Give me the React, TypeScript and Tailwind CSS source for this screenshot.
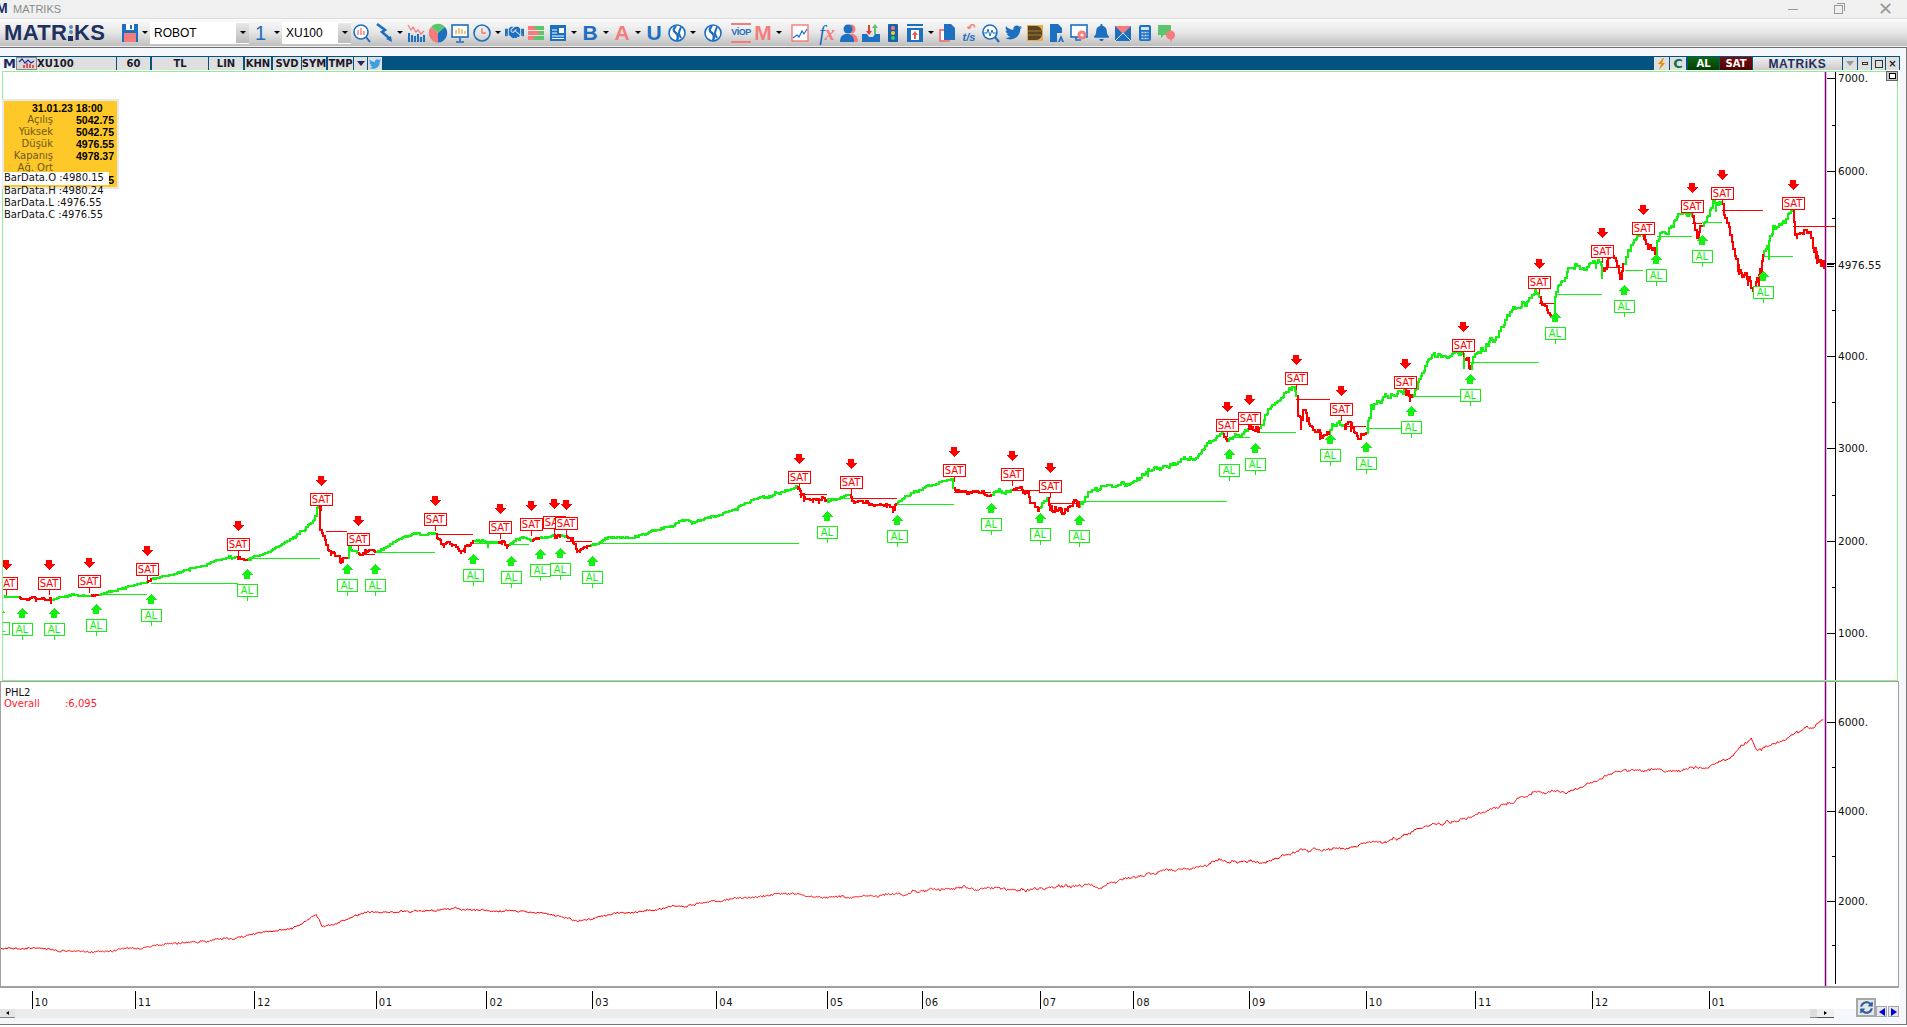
import { ReactNode } from "react";
import { FaBell, FaHandshake, FaSyncAlt, FaTwitter } from "react-icons/fa";

const K = 1907 / 1568;
const BLUE = "#1d6fc0";
const SALMON = "#f47c7c";
const GREEN = "#5cc46a";

// [x, y, 0 green | 1 red] in page pixels
const PRICE: [number, number, number][] = [
  [3, 597, 0], [18, 597, 0], [24, 598, 1], [41, 597, 1], [51, 599, 1], [69, 595, 0], [90, 596, 0], [98, 594, 1], [122, 588, 0], [147, 583, 0],
  [151, 581, 1], [190, 568, 0], [229, 557, 0], [237, 558, 0], [247, 559, 1], [269, 550, 0], [294, 538, 0], [314, 520, 0], [318, 503, 0],
  [320, 530, 1], [326, 547, 1], [335, 557, 1], [341, 560, 1], [347, 555, 1], [349, 547, 0], [357, 553, 0], [365, 550, 1], [375, 554, 1],
  [384, 547, 0], [400, 538, 0], [429, 532, 0], [435, 533, 0], [441, 542, 1], [449, 540, 1], [459, 548, 1], [473, 543, 1], [498, 540, 0],
  [508, 547, 1], [522, 537, 0], [531, 540, 0], [539, 540, 1], [553, 536, 0], [555, 538, 1], [560, 537, 1], [565, 537, 0], [571, 538, 1],
  [577, 555, 1], [590, 545, 1], [594, 543, 0], [608, 540, 0], [640, 534, 0], [654, 532, 0], [676, 525, 0], [701, 522, 0], [726, 512, 0],
  [751, 500, 0], [776, 493, 0], [797, 489, 0], [801, 497, 1], [811, 502, 1], [826, 499, 1], [849, 496, 0], [852, 503, 1], [869, 505, 1],
  [890, 508, 1], [896, 505, 1], [911, 495, 0], [926, 488, 0], [951, 480, 0], [953, 488, 0], [961, 490, 1], [985, 495, 1], [991, 492, 1],
  [1011, 487, 0], [1026, 492, 1], [1036, 505, 1], [1039, 506, 1], [1047, 498, 0], [1050, 502, 1], [1056, 506, 1], [1065, 502, 1], [1079, 505, 1],
  [1092, 493, 0], [1122, 489, 0], [1140, 480, 0], [1161, 468, 0], [1182, 460, 0], [1193, 462, 0], [1207, 445, 0], [1223, 436, 0], [1227, 440, 1],
  [1233, 435, 0], [1248, 430, 0], [1252, 433, 1], [1259, 427, 1], [1268, 410, 0], [1293, 387, 0], [1296, 398, 0], [1298, 417, 1], [1304, 407, 1],
  [1318, 425, 1], [1329, 423, 1], [1336, 420, 0], [1343, 425, 0], [1348, 422, 1], [1361, 435, 1], [1366, 432, 1], [1371, 407, 0], [1386, 396, 0],
  [1404, 393, 0], [1407, 398, 1], [1412, 397, 1], [1425, 363, 0], [1453, 356, 0], [1464, 360, 0], [1470, 365, 1], [1475, 348, 0], [1493, 340, 0],
  [1507, 320, 0], [1528, 305, 0], [1535, 290, 0], [1539, 300, 0], [1553, 310, 1], [1555, 293, 0], [1568, 272, 0], [1593, 263, 0], [1598, 257, 0],
  [1602, 267, 0], [1616, 265, 1], [1620, 283, 1], [1623, 273, 1], [1628, 253, 0], [1640, 237, 0], [1643, 243, 0], [1655, 245, 1], [1657, 233, 0],
  [1675, 218, 0], [1692, 213, 0], [1697, 232, 1], [1702, 223, 1], [1713, 200, 0], [1722, 205, 0], [1727, 227, 1], [1733, 250, 1], [1745, 267, 1],
  [1753, 287, 1], [1763, 257, 1], [1773, 227, 0], [1792, 213, 0], [1795, 230, 1], [1810, 240, 1], [1817, 253, 1], [1824, 263, 1],
];

const SAT: [number, number][] = [
  [6, 583], [49, 583], [89, 581], [147, 569], [238, 544], [321, 499], [358, 539], [435, 519], [500, 527], [531, 524], [554, 522], [566, 523],
  [799, 477], [851, 482], [954, 470], [1012, 474], [1050, 486], [1227, 425], [1249, 418], [1296, 378], [1341, 409], [1405, 382], [1463, 345],
  [1539, 282], [1602, 251], [1643, 228], [1692, 206], [1722, 193], [1793, 203],
];

const AL: [number, number][] = [
  [-1, 628], [22, 629], [54, 629], [96, 625], [151, 615], [247, 590], [347, 585], [375, 585], [473, 575], [511, 577], [540, 570], [560, 569], [592, 577],
  [827, 532], [897, 536], [991, 524], [1040, 534], [1079, 536], [1229, 470], [1255, 464], [1330, 455], [1366, 463], [1411, 427], [1470, 395],
  [1555, 333], [1624, 306], [1656, 275], [1702, 256], [1763, 292],
];

const GREEN_LEVELS = [
  [98, 147, 594], [151, 238, 583], [247, 320, 558], [375, 435, 552], [473, 500, 543], [510, 529, 544], [592, 799, 543], [827, 851, 498], [897, 954, 504],
  [992, 1012, 492], [1079, 1227, 501], [1229, 1250, 437], [1259, 1296, 432], [1366, 1404, 428], [1412, 1461, 396], [1470, 1539, 362], [1555, 1602, 294],
  [1625, 1643, 270], [1657, 1692, 236], [1702, 1722, 222], [1763, 1793, 256],
];

const RED_LEVELS = [
  [326, 347, 531], [359, 375, 554], [435, 473, 534], [566, 592, 541], [799, 827, 494], [851, 897, 498], [954, 991, 492], [1012, 1039, 490], [1050, 1079, 503],
  [1296, 1330, 399], [1343, 1366, 426], [1539, 1555, 303], [1602, 1624, 267], [1692, 1702, 223], [1722, 1763, 210], [1793, 1835, 226],
];

// the lower pane line, taken from the picture at 1568 wide
const OVERALL = [
  [0, 780], [50, 781], [90, 782], [150, 776], [200, 770], [240, 763], [260, 752], [265, 763], [300, 750], [380, 747], [440, 750], [475, 757], [500, 752],
  [600, 740], [640, 735], [700, 738], [780, 730], [850, 731], [900, 727], [960, 717], [1000, 707], [1040, 710], [1070, 697], [1100, 697], [1130, 693],
  [1170, 680], [1210, 672], [1260, 652], [1290, 650], [1340, 633], [1400, 632], [1425, 625], [1440, 605], [1445, 615], [1480, 603], [1500, 593],
];

const MONTHS: [string, number][] = [
  ["10", 26], ["11", 111], ["12", 209], ["01", 309], ["02", 400], ["03", 487], ["04", 589], ["05", 680],
  ["06", 758], ["07", 855], ["08", 932], ["09", 1027], ["10", 1123], ["11", 1213], ["12", 1309], ["01", 1405],
];

const seeded = (seed: number) => () => {
  seed = (seed + 0x6d2b79f5) | 0;
  let t = Math.imul(seed ^ (seed >>> 15), 1 | seed);
  t = (t + Math.imul(t ^ (t >>> 7), 61 | t)) ^ t;
  return ((t ^ (t >>> 14)) >>> 0) / 4294967296;
};

const buildBars = () => {
  const rnd = seeded(7);
  const paths = ["", ""];
  let py = PRICE[0][1];
  let walk = 0;
  for (let i = 1; i < PRICE.length; i++) {
    const [x0, y0] = PRICE[i - 1];
    const [x1, y1, c] = PRICE[i];
    const steps = Math.max(1, Math.round((x1 - x0) / 1.5));
    for (let s = 1; s <= steps; s++) {
      const x = x0 + ((x1 - x0) * s) / steps;
      const base = y0 + ((y1 - y0) * s) / steps;
      const amp = (x < 300 ? 0.8 : x < 1000 ? 1.3 : x < 1300 ? 2.4 : 3.4) * (c ? 1.6 : 1);
      walk = walk * 0.86 + (rnd() - 0.5) * amp * 1.6;
      const y = base + walk + (rnd() - 0.5) * amp;
      let bot = Math.max(y, py) + 1;
      if (rnd() < (c ? 0.14 : 0.03)) bot += rnd() * (x > 1200 ? 13 : 4);
      paths[c] += `M${x.toFixed(1)} ${(Math.min(y, py) - 1).toFixed(1)}V${bot.toFixed(1)}`;
      py = y;
    }
  }
  return paths;
};

const buildOverall = () => {
  const rnd = seeded(21);
  let d = "";
  let walk = 0;
  for (let i = 1; i < OVERALL.length; i++) {
    const [x0, y0] = OVERALL[i - 1];
    const [x1, y1] = OVERALL[i];
    const steps = Math.round((x1 - x0) * K);
    for (let s = 0; s < steps; s++) {
      const x = (x0 + ((x1 - x0) * s) / steps) * K;
      walk = walk * 0.93 + (rnd() - 0.5) * (x < 900 ? 1.2 : 2.2);
      const y = (y0 + ((y1 - y0) * s) / steps) * K + walk + (rnd() - 0.5) * 1.6;
      d += `${d ? "L" : "M"}${x.toFixed(1)} ${y.toFixed(1)}`;
    }
  }
  return d;
};

const bars = buildBars();
const overall = buildOverall();

const Caret = () => (
  <span className="flex w-[10px] justify-center">
    <span className="h-0 w-0 border-x-[3px] border-t-[3px] border-x-transparent border-t-black" />
  </span>
);

const Tool = ({ children, className = "" }: { children: ReactNode; className?: string }) => (
  <span className={`flex h-[22px] w-[22px] items-center justify-center ${className}`}>{children}</span>
);

const Ico = ({ children }: { children: ReactNode }) => (
  <svg width="20" height="20" viewBox="0 0 20 20">
    {children}
  </svg>
);

const Drop = () => (
  <span className="flex h-[20px] w-[13px] items-center justify-center bg-gradient-to-b from-[#e8e8e8] to-[#bbbbbb]">
    <span className="h-0 w-0 border-x-[3px] border-t-[3px] border-x-transparent border-t-black" />
  </span>
);

const Globe = () => (
  <Ico>
    <circle cx="10" cy="10" r="8" fill="#fff" stroke={BLUE} strokeWidth="1.6" />
    <path d="M9 3C6 6 6 8 9 10s2 5 1 8" stroke={BLUE} strokeWidth="2.4" fill="none" />
    <path d="M14 4c-1 3-2 4-2 6s1 3 2 5" stroke={BLUE} strokeWidth="2" fill="none" />
  </Ico>
);

const Toolbar = () => (
  <div className="flex h-[27px] items-center bg-gradient-to-b from-[#fbfbfb] via-[#e6e6e6] to-[#bfbfbf]">
    <span className="ml-[4px] flex w-[116px] items-center font-['Liberation_Sans',sans-serif] text-[22px] leading-none font-bold tracking-[0.3px] text-[#20305f]">
      MATR
      <span className="mx-[1px] flex h-[16px] w-[5px] flex-col items-center justify-between">
        <span className="h-[4px] w-[4px] rounded-full bg-[#5a86b8]" />
        <span className="h-[4px] w-[4px] rounded-full bg-[#5a86b8]" />
        <span className="h-[5px] w-[5px] bg-[#20305f]" />
      </span>
      KS
    </span>
    <span className="flex w-[20px] justify-center">
      <Ico>
        <rect x="2" y="1" width="16" height="18" fill={BLUE} />
        <rect x="6" y="1" width="8" height="6" fill="#fff" />
        <rect x="10" y="2" width="2" height="4" fill={BLUE} />
        <rect x="4" y="10" width="12" height="9" fill={SALMON} />
      </Ico>
    </span>
    <Caret />
    <div className="flex h-[22px] w-[99px] items-center justify-between bg-white pl-[4px] text-[12px] text-black">
      ROBOT
      <Drop />
    </div>
    <span className="flex w-[23px] justify-center text-[20px] leading-none text-[#1d6fc0]">1</span>
    <Caret />
    <div className="flex h-[22px] w-[69px] items-center justify-between bg-white pl-[4px] text-[12px] text-black">
      XU100
      <Drop />
    </div>
    <Tool>
      <Ico>
        <circle cx="9" cy="9" r="7" fill="#fff" stroke={BLUE} strokeWidth="1.6" />
        <path d="M6 12V7M9 12V5M12 12V8" stroke={SALMON} strokeWidth="1.4" />
        <path d="M14 14l4 5" stroke={BLUE} strokeWidth="2" />
      </Ico>
    </Tool>
    <Tool>
      <Ico>
        <path d="M3 1l8 6-3 2 7 6" stroke={BLUE} strokeWidth="2.6" fill="none" />
        <path d="M12 16l6 3-1-6z" fill={BLUE} />
      </Ico>
    </Tool>
    <Caret />
    <Tool>
      <Ico>
        <path d="M2 2l3 5 2-3 3 5 2-2 3 4 3-3" stroke={SALMON} strokeWidth="1.2" fill="none" />
        <path d="M3 19V10M6 19V12M9 19V13M12 19V11M15 19V14M18 19V12" stroke={BLUE} strokeWidth="2" />
      </Ico>
    </Tool>
    <Tool>
      <Ico>
        <path d="M10 10L3 4a9 9 0 0 1 14 0z" fill={GREEN} />
        <path d="M10 10V19.5A9.5 9.5 0 0 1 3 4z" fill={SALMON} />
        <path d="M10 10V19.5A9.5 9.5 0 0 0 17 4z" fill={BLUE} />
      </Ico>
    </Tool>
    <Tool>
      <Ico>
        <rect x="2" y="2" width="16" height="12" fill="#fff" stroke={BLUE} strokeWidth="1.6" />
        <path d="M6 11V7M9 11V5M12 11V6M15 11V8" stroke="#e8a030" strokeWidth="1.2" />
        <path d="M10 14v4M6 19h8" stroke={BLUE} strokeWidth="1.6" />
      </Ico>
    </Tool>
    <Tool>
      <Ico>
        <circle cx="10" cy="10" r="8" fill="none" stroke={BLUE} strokeWidth="1.6" />
        <path d="M10 5v5h4" stroke={SALMON} strokeWidth="1.4" fill="none" />
      </Ico>
    </Tool>
    <Caret />
    <Tool>
      <FaHandshake size={19} color={BLUE} />
    </Tool>
    <Tool>
      <Ico>
        <rect x="2" y="3" width="7" height="4" fill={SALMON} />
        <rect x="9" y="3" width="9" height="4" fill={GREEN} />
        <rect x="2" y="8" width="11" height="4" fill={SALMON} />
        <rect x="13" y="8" width="5" height="4" fill={GREEN} />
        <rect x="2" y="13" width="6" height="4" fill={SALMON} />
        <rect x="8" y="13" width="10" height="4" fill={GREEN} />
      </Ico>
    </Tool>
    <Tool>
      <Ico>
        <rect x="2" y="2" width="16" height="16" fill={BLUE} />
        <path d="M4 7h5M4 10h5M4 13h12M4 15.5h12" stroke="#fff" strokeWidth="1.2" />
        <rect x="11" y="5" width="5" height="5" fill="#fff" />
      </Ico>
    </Tool>
    <Caret />
    <Tool>
      <span className="text-[21px] leading-none font-bold text-[#1d6fc0]">B</span>
    </Tool>
    <Caret />
    <Tool>
      <span className="text-[21px] leading-none font-bold text-[#f47c7c]">A</span>
    </Tool>
    <Caret />
    <Tool>
      <span className="text-[21px] leading-none font-bold text-[#1d6fc0]">U</span>
    </Tool>
    <Tool className="ml-[1px]">
      <Globe />
    </Tool>
    <Caret />
    <Tool className="ml-[4px]">
      <Globe />
    </Tool>
    <Tool className="ml-[6px]">
      <span className="flex h-[20px] w-[20px] flex-col justify-between">
        <span className="h-[2px] bg-[#f47c7c]" />
        <span className="text-center text-[9px] leading-none font-bold tracking-[-0.5px] text-[#1d6fc0]">VİOP</span>
        <span className="h-[2px] bg-[#f47c7c]" />
      </span>
    </Tool>
    <Tool>
      <span className="text-[21px] leading-none font-bold text-[#f47c7c]">M</span>
    </Tool>
    <Caret />
    <Tool className="ml-[5px]">
      <Ico>
        <rect x="2" y="2" width="16" height="16" fill="#fff" stroke={SALMON} strokeWidth="1.4" />
        <path d="M3 15l4-3 2 2 3-6 2 3 3-5" stroke={BLUE} strokeWidth="1.2" fill="none" />
      </Ico>
    </Tool>
    <Tool className="ml-[5px]">
      <span className="font-['Liberation_Serif',serif] text-[20px] leading-none italic">
        <span className="text-[#1d6fc0]">f</span>
        <span className="font-bold text-[#f47c7c]">x</span>
      </span>
    </Tool>
    <Tool>
      <Ico>
        <circle cx="12" cy="6" r="4.5" fill={SALMON} />
        <path d="M8 19c0-6 2-8 5-8s6 2 6 8z" fill={SALMON} />
        <circle cx="9" cy="6" r="4.5" fill={BLUE} />
        <path d="M1 19c0-6 3-8 7-8s7 2 7 8z" fill={BLUE} />
      </Ico>
    </Tool>
    <Tool>
      <Ico>
        <path d="M1 11h5l2 3h4l2-3h5v8H1z" fill={BLUE} />
        <path d="M7 2v6H5l3 4 3-4H9V2z" fill="#e53b3b" />
        <path d="M13 11V5h-2l3-4 3 4h-2v6z" fill={GREEN} />
      </Ico>
    </Tool>
    <Tool>
      <Ico>
        <rect x="5" y="1" width="10" height="18" rx="1" fill="#1d5fa8" />
        <circle cx="10" cy="5" r="2" fill={SALMON} />
        <circle cx="10" cy="10" r="2" fill="#f4d020" />
        <circle cx="10" cy="15" r="2" fill="#30d060" />
      </Ico>
    </Tool>
    <Tool>
      <Ico>
        <rect x="2" y="1" width="16" height="2" fill={BLUE} />
        <rect x="2" y="5" width="16" height="14" fill={BLUE} />
        <rect x="6" y="7" width="8" height="10" fill="#fff" />
        <path d="M10 8l3 4h-2v4H9v-4H7z" fill="#e95b5b" />
      </Ico>
    </Tool>
    <Caret />
    <Tool>
      <Ico>
        <rect x="2" y="6" width="11" height="13" fill={SALMON} />
        <rect x="4" y="8" width="8" height="9" fill="#fff" />
        <path d="M7 1h7l4 4v12H7z" fill={BLUE} />
      </Ico>
    </Tool>
    <Tool>
      <span className="relative flex h-[20px] w-[20px] items-end justify-center text-[11px] leading-none font-bold text-[#1d6fc0] italic">
        <span className="absolute top-0 left-[7px] text-[10px] text-[#f47c7c]">↶</span>
        t/s
      </span>
    </Tool>
    <Tool>
      <Ico>
        <circle cx="9" cy="9" r="7" fill="#fff" stroke={BLUE} strokeWidth="1.6" />
        <path d="M3 10h3l1-4 2 7 2-6 1 3h4" stroke={BLUE} strokeWidth="1" fill="none" />
        <path d="M14 14l4 5" stroke={BLUE} strokeWidth="2.2" />
      </Ico>
    </Tool>
    <Tool>
      <FaTwitter size={17} color={BLUE} />
    </Tool>
    <Tool>
      <Ico>
        <rect x="2" y="2" width="16" height="16" fill="#e3ad4a" />
        <path d="M3 3h8c4 0 6 3 6 7s-2 7-6 7H3z" fill="#5b4520" />
        <path d="M3 8h13M3 12h13" stroke="#8a6a30" strokeWidth="1.4" />
      </Ico>
    </Tool>
    <Tool>
      <Ico>
        <path d="M3 1h8l4 4v5H10v9H3z" fill={BLUE} />
        <path d="M11 19l3-7 3 7h-2l-1-3-1 3z" fill={BLUE} />
      </Ico>
    </Tool>
    <Tool>
      <Ico>
        <rect x="2" y="2" width="16" height="12" fill="#fff" stroke={BLUE} strokeWidth="1.6" />
        <path d="M7 14v3h5" stroke={BLUE} strokeWidth="1.6" fill="none" />
        <circle cx="13" cy="12" r="4.5" fill={SALMON} />
        <circle cx="13" cy="12" r="1.6" fill="#fff" />
      </Ico>
    </Tool>
    <Tool>
      <FaBell size={17} color={BLUE} />
    </Tool>
    <Tool>
      <Ico>
        <rect x="2" y="3" width="16" height="15" fill={BLUE} />
        <path d="M2 3h16l-8 8z" fill={SALMON} />
        <path d="M2 18l8-8 8 8" stroke="#fff" strokeWidth="0.8" fill="none" />
      </Ico>
    </Tool>
    <Tool>
      <Ico>
        <rect x="4" y="2" width="12" height="16" rx="2" fill={BLUE} />
        <rect x="6" y="4" width="8" height="3" fill="#cfe3f7" />
        <path d="M6.5 9.5h7M6.5 12.5h7M6.5 15.5h7" stroke="#cfe3f7" strokeWidth="1.4" strokeDasharray="2 1" />
      </Ico>
    </Tool>
    <Tool>
      <Ico>
        <path d="M1 2h13v10H7l-3 3v-3H1z" fill={GREEN} />
        <circle cx="13.5" cy="12" r="4.5" fill={SALMON} />
        <path d="M13 16l1 4 1-4z" fill={SALMON} />
      </Ico>
    </Tool>
  </div>
);

const Cell = ({ className, children }: { className: string; children: ReactNode }) => (
  <span className={`flex h-[13px] items-center justify-center bg-[#dfdfdf] text-[10px] font-bold text-[#1a1a2a] ${className}`}>{children}</span>
);

const ChartHeader = () => (
  <div className="flex h-[14px] items-end bg-[#04527f] font-['DejaVu_Sans',sans-serif]">
    <span className="flex h-[13px] w-[3px] bg-[#f4f7fb]" />
    <span className="flex h-[13px] w-[13px] items-center justify-center bg-[#f4f7fb] text-[13px] leading-none font-bold text-[#1c2a5e]">M</span>
    <span className="flex h-[13px] w-[21px] items-center justify-center border border-[#888888] bg-[#d8d8d8]">
      <svg width="18" height="11" viewBox="0 0 18 11">
        <path d="M1 4l3-3 3 4 3-3 3 3 3-2" stroke="#1c2a9e" strokeWidth="1.2" fill="none" />
        <path d="M6 10V7M9 10V5M12 10V6M15 10V7" stroke="#e02020" strokeWidth="1.4" />
      </svg>
    </span>
    <Cell className="mr-[1px] w-[79px] !justify-start">XU100</Cell>
    <Cell className="mr-[2px] w-[33px]">60</Cell>
    <Cell className="mr-[1px] w-[56px]">TL</Cell>
    <Cell className="mr-[2px] w-[34px]">LIN</Cell>
    <Cell className="mr-[2px] w-[26px]">KHN</Cell>
    <Cell className="mr-[1px] w-[28px]">SVD</Cell>
    <Cell className="mr-[2px] w-[24px]">SYM</Cell>
    <Cell className="mr-[1px] w-[25px]">TMP</Cell>
    <Cell className="mr-[1px] w-[13px]">
      <span className="h-0 w-0 border-x-[4px] border-t-[5px] border-x-transparent border-t-[#1c2a5e]" />
    </Cell>
    <Cell className="w-[14px]">
      <FaTwitter size={12} color="#3aa0e0" />
    </Cell>
    <span className="flex-1" />
    <Cell className="mr-[1px] w-[15px]">
      <svg width="9" height="12" viewBox="0 0 9 12">
        <path d="M6 0L1 6h3l-2 6 6-7H5l2-5z" fill="#e8900c" />
      </svg>
    </Cell>
    <Cell className="mr-[2px] w-[16px]">
      <span className="text-[13px] leading-none text-[#0e7050]">C</span>
    </Cell>
    <span className="mr-[1px] flex h-[13px] w-[31px] items-center justify-center bg-gradient-to-b from-[#0c6a0c] to-[#063a06] text-[10px] font-bold text-white">AL</span>
    <span className="mr-[1px] flex h-[13px] w-[32px] items-center justify-center bg-gradient-to-b from-[#7a0c0c] to-[#4a0404] text-[10px] font-bold text-white">SAT</span>
    <Cell className="mr-[1px] w-[89px] bg-gradient-to-b from-[#f0f0f0] to-[#cccccc] font-['Liberation_Sans',sans-serif] !text-[12px] tracking-[0.6px] !text-[#20305f]">MATRiKS</Cell>
    <Cell className="w-[14px]">
      <span className="h-0 w-0 border-x-[4px] border-t-[5px] border-x-transparent border-t-[#999999]" />
    </Cell>
    <Cell className="ml-[1px] w-[13px]">
      <span className="h-[3px] w-[6px] border border-[#333333]" />
    </Cell>
    <Cell className="ml-[1px] w-[13px]">
      <span className="h-[8px] w-[8px] border border-[#333333]" />
    </Cell>
    <Cell className="ml-[1px] w-[13px] text-[9px]">×</Cell>
    <span className="h-[13px] w-[1px]" />
  </div>
);

const SatMark = ({ x, y }: { x: number; y: number }) => (
  <g>
    <path d={`M${x} ${y + 6}v6`} stroke="#ff0000" />
    <rect x={x - 11} y={y - 6} width="22" height="12" fill="#fff" stroke="#ff0000" />
    <text x={x} y={y + 4} textAnchor="middle" fill="#ff0000" className="font-['DejaVu_Sans',sans-serif] text-[10px]">
      SAT
    </text>
    <path d={`M${x - 3} ${y - 23}h6v4h3l-6 6-6-6h3z`} fill="#ff0000" />
  </g>
);

const AlMark = ({ x, y }: { x: number; y: number }) => (
  <g>
    <path d={`M${x} ${y + 6}v5`} stroke="#14f014" />
    <rect x={x - 10} y={y - 6} width="20" height="12" fill="#fff" stroke="#14f014" />
    <text x={x} y={y + 4} textAnchor="middle" fill="#14f014" className="font-['DejaVu_Sans',sans-serif] text-[10px]">
      AL
    </text>
    <path d={`M${x - 3} ${y - 11}h6v-4h3l-6-6-6 6h3z`} fill="#14f014" />
  </g>
);

const AxisLabel = ({ y, children }: { y: number; children: string }) => (
  <text x="1838" y={y + 4} fill="#111" className="font-['DejaVu_Sans',sans-serif] text-[10.5px]">
    {children}
  </text>
);

const MainChart = () => (
  <svg width="1894" height="608" viewBox="3 72 1894 608" className="block">
    <path d="M1825.5 72V680" stroke="#800080" strokeWidth="1.5" />
    <path d="M1835.5 72V680" stroke="#000" />
    {[78, 171, 263, 356, 448, 541, 633].map((y) => (
      <path key={y} d={`M1827 ${y + 0.5}h8`} stroke="#000" />
    ))}
    {[125, 218, 310, 402, 495, 587].map((y) => (
      <path key={y} d={`M1832 ${y + 0.5}h3`} stroke="#000" />
    ))}
    <path d="M1827 264.5h7M1827 266.5h7" stroke="#000" />
    <AxisLabel y={78}>7000.</AxisLabel>
    <AxisLabel y={171}>6000.</AxisLabel>
    <AxisLabel y={265}>4976.55</AxisLabel>
    <AxisLabel y={356}>4000.</AxisLabel>
    <AxisLabel y={448}>3000.</AxisLabel>
    <AxisLabel y={541}>2000.</AxisLabel>
    <AxisLabel y={633}>1000.</AxisLabel>
    {GREEN_LEVELS.map(([a, b, y]) => (
      <path key={`${a}-${y}`} d={`M${a} ${y + 0.5}H${b}`} stroke="#14f014" />
    ))}
    {RED_LEVELS.map(([a, b, y]) => (
      <path key={`${a}-${y}`} d={`M${a} ${y + 0.5}H${b}`} stroke="#ff0000" />
    ))}
    <path d={bars[0]} stroke="#14f014" strokeWidth="2" shapeRendering="crispEdges" fill="none" />
    <path d={bars[1]} stroke="#ff0000" strokeWidth="2" shapeRendering="crispEdges" fill="none" />
    <g shapeRendering="crispEdges">
      {AL.map(([x, y]) => (
        <AlMark key={`a${x}`} x={x} y={y} />
      ))}
      {SAT.map(([x, y]) => (
        <SatMark key={`s${x}`} x={x} y={y} />
      ))}
    </g>
  </svg>
);

const LowerChart = () => (
  <svg width="1897" height="304" viewBox="1 682 1897 304" className="block">
    <path d="M1825.5 682V986" stroke="#800080" strokeWidth="1.5" />
    <path d="M1835.5 682V984" stroke="#000" />
    {[722, 811, 901].map((y) => (
      <path key={y} d={`M1827 ${y + 0.5}h8`} stroke="#000" />
    ))}
    {[767, 856, 945].map((y) => (
      <path key={y} d={`M1832 ${y + 0.5}h3`} stroke="#000" />
    ))}
    <AxisLabel y={722}>6000.</AxisLabel>
    <AxisLabel y={811}>4000.</AxisLabel>
    <AxisLabel y={901}>2000.</AxisLabel>
    <path d={overall} stroke="#ff0000" fill="none" />
  </svg>
);

const TimeAxis = () => (
  <svg width="1900" height="21" viewBox="0 988 1900 21" className="block">
    {MONTHS.map(([m, x]) => (
      <g key={`${m}${x}`}>
        <path d={`M${Math.round(x * K) + 0.5} 991V1009`} stroke="#000" />
        <text x={x * K + 3} y="1006" fill="#111" className="font-['DejaVu_Sans',sans-serif] text-[10px] tracking-[0.5px]">
          {m}
        </text>
      </g>
    ))}
  </svg>
);

export default function App() {
  return (
    <div className="flex h-[1027px] w-[1907px] flex-col overflow-hidden bg-white font-['Liberation_Sans',Arial,sans-serif]">
      <div className="flex h-[19px] items-center border-b border-[#dddddd] bg-[#f0f0f0]">
        <span className="-ml-[4px] w-[10px] self-start text-[14px] leading-[16px] font-bold text-[#1c2a5e]">M</span>
        <span className="ml-[7px] text-[11px] text-[#8a8a8a]">MATRIKS</span>
        <span className="flex-1" />
        <span className="h-[1px] w-[10px] bg-[#999999]" />
        <span className="relative ml-[36px] h-[9px] w-[9px] border border-[#999999]">
          <span className="absolute -top-[3px] -right-[3px] h-[8px] w-[8px] border-t border-r border-[#999999]" />
        </span>
        <span className="mr-[14px] ml-[35px] text-[18px] leading-none font-light text-[#999999]">✕</span>
      </div>
      <Toolbar />
      <div className="h-[2px] border-t border-[#eeeeee] bg-[#6e6e6e]" />
      <div className="flex min-h-0 flex-1">
        <div className="flex w-[1900px] flex-col bg-[#f4f7fb]">
          <div className="h-[8px]" />
          <ChartHeader />
          <div className="h-[1px] bg-white" />
          <div className="relative bg-white pl-[2px]">
            <div className="h-[610px] w-[1896px] overflow-hidden border border-[#90ee90]">
              <MainChart />
            </div>
            <span className="absolute top-0 left-[1886px] h-[10px] w-[12px] border border-[#666666] bg-[#c8c8c8]">
              <span className="m-auto mt-[1px] block h-[6px] w-[7px] border border-black bg-white" />
            </span>
            {/* info box */}
            <div className="absolute top-[28px] left-[2px] h-[90px] w-[117px] border-2 border-[#e8e8e8] bg-[#fdc828] pt-[1px] text-[11px]">
              <div className="h-[12px] pl-[28px] text-[10.5px] leading-[12px] font-bold text-black">31.01.23 18:00</div>
              {[
                ["Açılış", "5042.75"],
                ["Yüksek", "5042.75"],
                ["Düşük", "4976.55"],
                ["Kapanış", "4978.37"],
                ["Ağ. Ort", ""],
                ["", "4980.15"],
              ].map(([label, value]) => (
                <div key={label + value} className="flex h-[12px] items-center leading-none">
                  <span className="w-[49px] text-right font-['DejaVu_Sans',sans-serif] text-[10px] text-[#6b5a20]">{label}</span>
                  <span className="w-[61px] text-right text-[10.5px] font-bold text-black">{value}</span>
                </div>
              ))}
            </div>
            <div className="absolute top-[101px] left-[3px] w-[106px] font-['DejaVu_Sans',sans-serif] text-[10px] leading-[12px] text-[#111111]">
              <div className="bg-white pb-[1px] pl-[1px]">BarData.O :4980.15</div>
              <div className="pl-[1px]">BarData.H :4980.24</div>
              <div className="pl-[1px]">BarData.L :4976.55</div>
              <div className="pl-[1px]">BarData.C :4976.55</div>
            </div>
          </div>
          <div className="relative h-[307px] w-[1899px] overflow-hidden border-x border-t border-b-2 border-[#a0a0a0] bg-white">
            <LowerChart />
            <div className="absolute top-[5px] left-[3px] font-['DejaVu_Sans',sans-serif] text-[10px] leading-[11px]">
              <div className="pl-[1px] text-[#111111]">PHL2</div>
              <div className="flex text-[#ff1a2a]">
                <span className="w-[61px]">Overall</span>
                <span>:6,095</span>
              </div>
            </div>
          </div>
          <div className="bg-white">
            <TimeAxis />
          </div>
          <div className="flex h-[9px] items-stretch bg-[#ececec]">
            <span className="flex w-[15px] items-center justify-center border-b border-[#888888] bg-[#e4e4e4]">
              <span className="h-0 w-0 border-y-[2px] border-r-[3px] border-y-transparent border-r-black" />
            </span>
            <span className="flex-1" />
            <span className="w-[7px] border-b border-[#888888] bg-[#dddddd]" />
            <span className="flex w-[17px] items-center justify-center border-b border-[#555555] bg-[#eeeeee]">
              <span className="h-0 w-0 border-y-[2px] border-l-[3px] border-y-transparent border-l-black" />
            </span>
            <span className="w-[66px] bg-[#f4f7fb]" />
          </div>
          <div className="relative flex-1">
            <span className="absolute -top-[20px] left-[1856px] flex h-[19px] w-[20px] items-center justify-center border-2 border-[#a8a8a8] bg-[#e6e6e6]">
              <FaSyncAlt size={13} color="#2a5f9e" />
            </span>
            <span className="absolute -top-[12px] left-[1876px] flex h-[11px] w-[11px] items-center justify-center border border-[#a8a8a8] bg-[#e6e6e6]">
              <span className="h-0 w-0 border-y-[4px] border-r-[6px] border-y-transparent border-r-[#0000dd]" />
            </span>
            <span className="absolute -top-[12px] left-[1888px] flex h-[11px] w-[11px] items-center justify-center border border-[#a8a8a8] bg-[#e6e6e6]">
              <span className="h-0 w-0 border-y-[4px] border-l-[6px] border-y-transparent border-l-[#0000dd]" />
            </span>
          </div>
          <div className="h-[1px]" />
        </div>
        <div className="flex flex-1 flex-col">
          <div className="flex-1 border-r border-[#777777] bg-[#f4f7fb]" />
        </div>
      </div>
      <div className="h-[3px] border-t border-[#777777] bg-white" />
    </div>
  );
}
